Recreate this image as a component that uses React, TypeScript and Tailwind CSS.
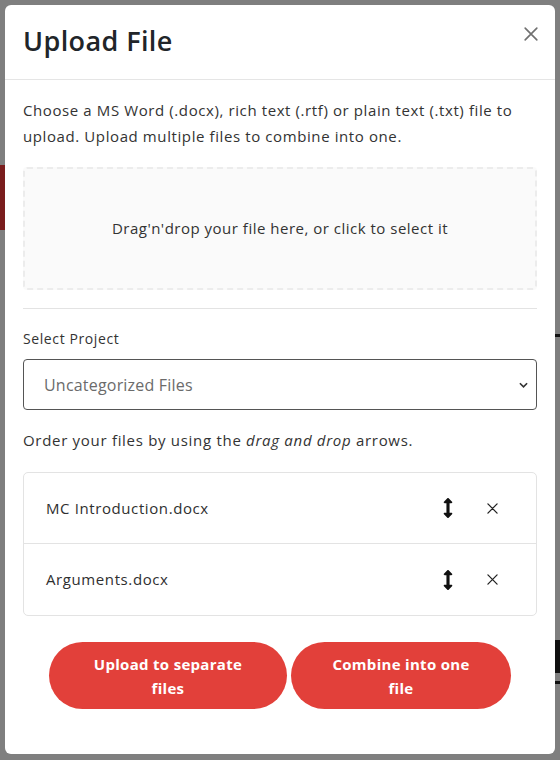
import React from "react";
import { FaArrowsAltV } from "react-icons/fa";

const font = { fontFamily: '"Open Sans", "Noto Sans", sans-serif' };

function XIcon({ className }: { className?: string }) {
  return (
    <svg viewBox="0 0 12 12" className={className} fill="none" stroke="currentColor" strokeWidth={1.4} strokeLinecap="round">
      <path d="M1 1L11 11M11 1L1 11" />
    </svg>
  );
}

function FileRow({ name, last }: { name: string; last?: boolean }) {
  return (
    <div className={`flex items-center h-[71px] pl-[22px] pr-[38px] ${last ? "" : "border-b border-[#e3e3e3]"}`}>
      <span className="flex-1 text-[15px] tracking-[0.6px] text-[#2f2f2f]">{name}</span>
      <FaArrowsAltV className="text-[#111] w-[12px] h-[20px] mr-[33px]" />
      <XIcon className="w-[11px] h-[11px] text-[#222]" />
    </div>
  );
}

export default function App() {
  return (
    <div className="relative w-[560px] h-[760px] bg-[#7f7f7f] p-[5px] overflow-hidden" style={font}>
      <div className="absolute left-0 top-[165px] w-[5px] h-[65px] bg-[#7a1d1d]" />
      <div className="absolute right-0 top-[334px] w-[5px] h-[3px] bg-[#111]" />
      <div className="absolute right-0 top-[640px] w-[5px] h-[33px] bg-[#111]" />
      <div className="absolute right-0 top-[681px] w-[5px] h-[3px] bg-[#111]" />
      <div className="relative w-[550px] h-[749px] bg-white rounded-[6px] flex flex-col">
        <div className="h-[75px] flex items-center justify-between pl-[18px] pr-[18px] border-b border-[#e5e5e5]">
          <h1 className="text-[27px] font-semibold text-[#212529] tracking-[0.4px] mt-[-2px]">Upload File</h1>
          <XIcon className="w-[14px] h-[14px] text-[#707070] mt-[-16px] mr-[-1px]" />
        </div>
        <div className="px-[18px] pt-[17px] flex flex-col">
          <p className="text-[15px] leading-[26px] tracking-[0.6px] text-[#333]">
            Choose a MS Word (.docx), rich text (.rtf) or plain text (.txt) file to upload. Upload multiple files to combine into one.
          </p>
          <div className="mt-[18px] h-[123px] bg-[#fafafa] border-2 border-dashed border-[#ececec] rounded-[4px] flex items-center justify-center">
            <span className="text-[15px] tracking-[0.5px] text-[#333]">Drag'n'drop your file here, or click to select it</span>
          </div>
          <div className="mt-[18px] border-t border-[#e3e3e3]" />
          <label className="mt-[20px] text-[14px] font-medium tracking-[0.6px] text-[#333] leading-[20px]">Select Project</label>
          <div className="mt-[10px] h-[51px] border border-[#555] rounded-[4px] flex items-center justify-between pl-[20px] pr-[8px]">
            <span className="text-[16px] tracking-[0.2px] text-[#6b6b6b]">Uncategorized Files</span>
            <svg viewBox="0 0 10 6" className="w-[9px] h-[6px]" fill="none" stroke="#333" strokeWidth={1.8}>
              <path d="M1 1L5 5L9 1" />
            </svg>
          </div>
          <p className="mt-[19px] text-[15px] leading-[22px] tracking-[0.7px] text-[#333]">
            Order your files by using the <em>drag and drop</em> arrows.
          </p>
          <div className="mt-[21px] border border-[#e3e3e3] rounded-[5px]">
            <FileRow name="MC Introduction.docx" />
            <FileRow name="Arguments.docx" last />
          </div>
          <div className="mt-[26px] flex justify-center gap-[4px]">
            <button className="w-[238px] h-[67px] rounded-full bg-[#e2403a] text-white font-bold text-[15px] tracking-[0.3px] leading-[24px] px-[30px]">
              Upload to separate files
            </button>
            <button className="w-[220px] h-[67px] rounded-full bg-[#e2403a] text-white font-bold text-[15px] tracking-[0.3px] leading-[24px] px-[30px]">
              Combine into one file
            </button>
          </div>
        </div>
      </div>
    </div>
  );
}
